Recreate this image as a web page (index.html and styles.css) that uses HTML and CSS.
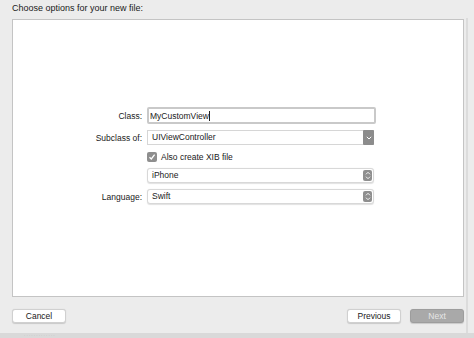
FILE: index.html
```html
<!DOCTYPE html>
<html>
<head>
<meta charset="utf-8">
<link rel="stylesheet" href="styles.css">
</head>
<body>
<div class="window">
  <div class="main">
    <div class="title">Choose options for your new file:</div>
    <div class="panel">
      <div class="form">
        <div class="row">
          <span class="label">Class:</span>
          <div class="field input focused">MyCustomView<span class="caret"></span></div>
        </div>
        <div class="row">
          <span class="label">Subclass of:</span>
          <div class="field combo">UIViewController
            <span class="combo-btn"><svg width="6" height="4" viewBox="0 0 6 4"><path d="M0.8 0.8 L3 3 L5.2 0.8" fill="none" stroke="#fff" stroke-width="1"/></svg></span>
          </div>
        </div>
        <div class="row check-row">
          <span class="label"></span>
          <span class="checkbox"><svg width="8" height="8" viewBox="0 0 8 8"><path d="M1.5 4.2 L3.3 6 L6.6 1.6" fill="none" stroke="#fff" stroke-width="1.3"/></svg></span>
          <span class="check-text">Also create XIB file</span>
        </div>
        <div class="row">
          <span class="label"></span>
          <div class="field popup">iPhone
            <span class="popup-btn"><svg width="6" height="9" viewBox="0 0 6 9"><path d="M1 3.3 L3 1.3 L5 3.3 M1 5.7 L3 7.7 L5 5.7" fill="none" stroke="#fff" stroke-width="0.9"/></svg></span>
          </div>
        </div>
        <div class="row">
          <span class="label">Language:</span>
          <div class="field popup">Swift
            <span class="popup-btn"><svg width="6" height="9" viewBox="0 0 6 9"><path d="M1 3.3 L3 1.3 L5 3.3 M1 5.7 L3 7.7 L5 5.7" fill="none" stroke="#fff" stroke-width="0.9"/></svg></span>
          </div>
        </div>
      </div>
    </div>
    <div class="buttons">
      <button class="btn">Cancel</button>
      <span class="spacer"></span>
      <button class="btn">Previous</button>
      <button class="btn disabled">Next</button>
    </div>
  </div>
  <div class="edge"></div>
</div>
<div class="footer"><span class="faint">· · · ·  ·  · · ·  ·  · · · ·</span></div>
</body>
</html>
```
FILE: styles.css
```css
* { box-sizing: border-box; }
html, body { margin: 0; padding: 0; }
body {
  width: 474px;
  height: 338px;
  background: #ececec;
  font-family: "Liberation Sans", Arial, sans-serif;
  font-size: 8.5px;
  color: #1a1a1a;
  overflow: hidden;
}
.window {
  display: flex;
  height: 333px;
}
.main {
  width: 466px;
  padding-left: 12px;
  display: flex;
  flex-direction: column;
}
.edge {
  width: 8px;
  border-left: 2px solid #dcdcdc;
  margin-left: 2px;
  margin-top: 18px;
}
.title {
  height: 19px;
  padding-top: 3px;
  font-size: 9px;
  line-height: 10px;
}
.panel {
  height: 278px;
  background: #fff;
  border: 1px solid #c4c4c4;
  padding-top: 87px;
}
.form {
  display: flex;
  flex-direction: column;
}
.row {
  display: flex;
  align-items: center;
  margin-bottom: 6px;
}
.label {
  width: 134px;
  text-align: right;
  padding-right: 5px;
  flex: none;
}
.field {
  height: 15px;
  line-height: 15px;
  padding-left: 4px;
  background: #fff;
  position: relative;
}
.input {
  width: 229px;
  height: 17px;
  line-height: 14px;
  border: 2px solid #c9c9c9;
  border-radius: 2px;
  padding-left: 1px;
}
.caret {
  display: inline-block;
  width: 1px;
  height: 10px;
  background: #222;
  vertical-align: -2px;
}
.combo {
  width: 227px;
  border: 1px solid #d6d6d6;
  line-height: 13px;
}
.combo-btn {
  position: absolute;
  right: -1px;
  top: -1px;
  width: 11px;
  height: 15px;
  background: #8c8c8c;
  border-radius: 1px;
  display: flex;
  align-items: center;
  justify-content: center;
}
.popup {
  width: 227px;
  border: 1px solid #d8d8d8;
  border-radius: 3px;
  line-height: 13px;
  box-shadow: 0 0.5px 1px rgba(0,0,0,0.12);
}
.popup-btn {
  position: absolute;
  right: 1px;
  top: 1px;
  width: 9px;
  height: 11px;
  background: #8f8f8f;
  border-radius: 2px;
  display: flex;
  align-items: center;
  justify-content: center;
}
.check-row { margin-top: 1px; margin-bottom: 6px; }
.checkbox {
  width: 10px;
  height: 10px;
  background: #8e8e8e;
  border-radius: 2px;
  display: flex;
  align-items: center;
  justify-content: center;
  margin-right: 4px;
}
.buttons {
  display: flex;
  align-items: center;
  padding-top: 12px;
  gap: 9px;
}
.spacer { flex: 1; }
.btn {
  width: 54px;
  height: 14px;
  padding: 0;
  font-family: inherit;
  font-size: 8.5px;
  line-height: 12px;
  color: #1a1a1a;
  background: #fff;
  border: 1px solid #d0d0d0;
  border-radius: 3px;
  box-shadow: 0 0.5px 1px rgba(0,0,0,0.15);
}
.btn.disabled {
  background: #a9a9a9;
  border-color: #9d9d9d;
  color: #e6e6e6;
}
.footer {
  height: 5px;
  background: #d9d9d9;
  font-size: 4px;
  color: #9a9a9a;
  padding-left: 24px;
  line-height: 5px;
  overflow: hidden;
}
```
